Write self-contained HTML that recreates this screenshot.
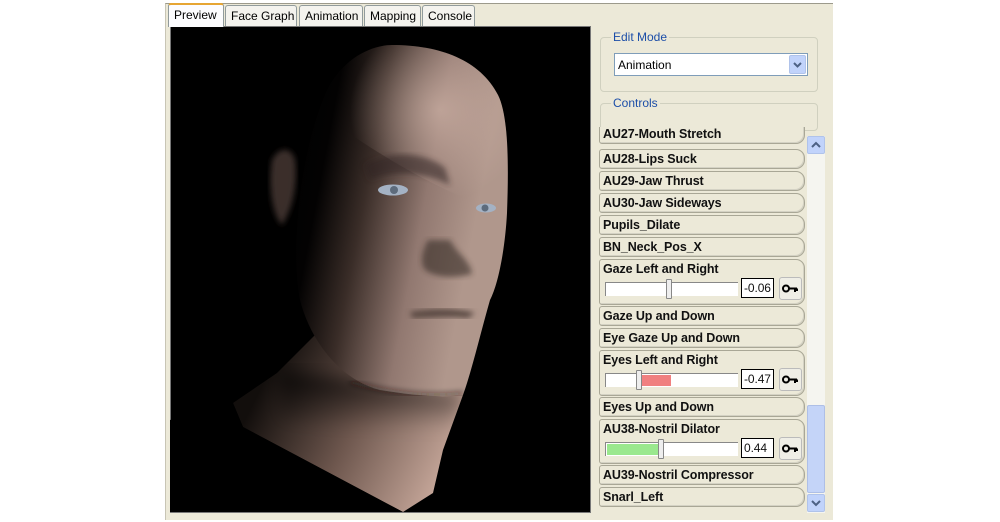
<!DOCTYPE html>
<html><head><style>
*{margin:0;padding:0;box-sizing:border-box}
body{width:1000px;height:522px;background:#fff;position:relative;overflow:hidden;font-family:Tahoma,"DejaVu Sans","Liberation Sans",sans-serif}
.win{position:absolute;left:165px;top:3px;width:668px;height:517px;background:#ece9d8;border-top:1px solid #9c9a8c;border-left:1px solid #c8c5b5}
.tab{position:absolute;top:5px;height:21px;font:12px "Liberation Sans",sans-serif;color:#000;border:1px solid #919b9c;border-bottom:none;background:#f4f3ee;padding:3px 0 0 5px;border-radius:3px 3px 0 0}
.tab.sel{top:3px;height:24px;background:#fcfcfe;border-top:2px solid #e6a533;z-index:2}
.vp{position:absolute;left:170px;top:26px;width:421px;height:487px;background:#000;border:1px solid #777}
.grp{position:absolute;border:1px solid #d0d0bf;border-radius:4px}
.glab{position:absolute;font:12px "Liberation Sans",sans-serif;color:#1c4ea8;background:#ece9d8;padding:0 2px}
.row{position:absolute;left:599px;width:206px;background:#ece9d8;border:1px solid #a9a796;border-radius:3px 9px 9px 3px;box-shadow:inset -1px -1px 0 #d4d2c4;font:bold 12.5px "Liberation Sans",sans-serif;color:#111;padding:2px 0 0 3px;height:20px;letter-spacing:-0.1px}
.track{position:absolute;left:5px;top:22px;width:133px;height:14px;background:#fff;border-top:1px solid #888;border-left:1px solid #888}
.thumb{position:absolute;top:19px;width:6px;height:20px;background:#eee;border:1px solid #888;border-radius:1px}
.val{position:absolute;left:141px;top:18px;width:33px;height:20px;background:#fff;border:1px solid #000;font:12px "Liberation Sans",sans-serif;padding:2px 0 0 2px;font-weight:normal}
.key{position:absolute;left:179px;top:17px;width:23px;height:23px;border:1px solid #bbb;border-radius:3px;background:#efeee6}
.sb{position:absolute;left:807px;width:18px;height:18px;background:#c1d3fb;border:1px solid #b0c3ea;border-radius:2px}
</style></head><body>
<div class="win"></div>
<div class="tab sel" style="left:168px;width:56px">Preview</div>
<div class="tab" style="left:225px;width:72px">Face Graph</div>
<div class="tab" style="left:299px;width:64px">Animation</div>
<div class="tab" style="left:364px;width:57px">Mapping</div>
<div class="tab" style="left:422px;width:53px">Console</div>
<div class="vp">
<svg width="421" height="487" viewBox="170 26 421 487" style="position:absolute;left:-1px;top:-1px">
<defs>
<linearGradient id="sk" gradientUnits="userSpaceOnUse" x1="300" y1="0" x2="510" y2="40">
<stop offset="0" stop-color="#000"/><stop offset="0.25" stop-color="#030202"/><stop offset="0.47" stop-color="#3a2d28"/><stop offset="0.75" stop-color="#917870"/><stop offset="1" stop-color="#b0978c"/></linearGradient>
<radialGradient id="hl" gradientUnits="userSpaceOnUse" cx="440" cy="110" r="90"><stop offset="0" stop-color="#cdb1a5" stop-opacity="0.75"/><stop offset="1" stop-color="#cdb1a5" stop-opacity="0"/></radialGradient>
<linearGradient id="nk" gradientUnits="userSpaceOnUse" x1="260" y1="390" x2="440" y2="480"><stop offset="0" stop-color="#120e0c"/><stop offset="0.5" stop-color="#6e574e"/><stop offset="1" stop-color="#c4a598"/></linearGradient>
<linearGradient id="ns" gradientUnits="userSpaceOnUse" x1="0" y1="380" x2="0" y2="430"><stop offset="0" stop-color="#000" stop-opacity="0.6"/><stop offset="1" stop-color="#000" stop-opacity="0"/></linearGradient>
<filter id="bl"><feGaussianBlur stdDeviation="3"/></filter>
<filter id="bl2"><feGaussianBlur stdDeviation="8"/></filter>
</defs>
<path d="M233 403 L277 373 L330 320 L463 395 L443 450 L433 493 L403 512 L243 427 Z" fill="url(#nk)"/>
<path d="M280 370 L463 395 L450 440 L280 420 Z" fill="url(#ns)" filter="url(#bl2)"/>
<path d="M233 403 L243 427 L403 512 L170 512 L170 420 Z" fill="#000"/>
<path d="M327 90 C345 55 375 45 392 45 C440 45 480 60 498 95 C508 115 509 160 507 213 C505 250 498 285 490 300 C480 335 472 370 463 395 C440 398 410 395 380 390 C340 380 310 340 300 300 C290 250 300 150 327 90 Z" fill="url(#sk)"/>
<path d="M327 90 C345 55 375 45 392 45 C440 45 480 60 498 95 C508 115 509 160 507 213 C460 200 400 170 330 120 Z" fill="url(#hl)"/>
<path d="M272 160 C280 145 292 148 295 160 C298 185 292 210 282 225 C272 215 268 185 272 160 Z" fill="#3a2e2a" filter="url(#bl)"/>
<path d="M365 165 C390 150 425 152 445 168 L450 185 C425 172 395 170 370 180 Z" fill="#2e2420" opacity="0.55" filter="url(#bl)"/>
<ellipse cx="393" cy="190" rx="15" ry="5.5" fill="#a4b2c4"/>
<circle cx="394" cy="190" r="4" fill="#5d6b7c"/>
<ellipse cx="486" cy="208" rx="10" ry="4.5" fill="#a4b2c4"/>
<circle cx="485" cy="208" r="3.5" fill="#5d6b7c"/>
<path d="M428 240 C420 255 420 268 428 272 C440 278 455 278 472 274 C470 260 458 255 450 240 Z" fill="#2a201c" opacity="0.55" filter="url(#bl)"/>
<path d="M410 312 C430 308 460 308 475 313 L468 318 C450 316 430 318 412 318 Z" fill="#5a4842" filter="url(#bl)"/>
<path d="M350 382 C400 396 440 396 463 393" stroke="#1e1614" stroke-width="2" fill="none" filter="url(#bl)"/>
</svg>
</div>
<div class="grp" style="left:600px;top:37px;width:218px;height:55px"></div>
<div class="glab" style="left:611px;top:30px">Edit Mode</div>
<div style="position:absolute;left:614px;top:53px;width:194px;height:23px;background:#fff;border:1px solid #7f9db9;font:12px 'Liberation Sans',sans-serif;padding:4px 0 0 3px">Animation</div>
<div style="position:absolute;left:789px;top:55px;width:17px;height:19px;background:#c1d3fb;border:1px solid #b0c3ea;border-radius:2px"><svg width="15" height="17"><path d="M4 7 L7.5 10.5 L11 7" stroke="#4d6185" stroke-width="2" fill="none"/></svg></div>
<div class="grp" style="left:600px;top:103px;width:218px;height:28px"></div>
<div class="glab" style="left:611px;top:96px">Controls</div>
<div style="position:absolute;left:596px;top:127px;width:231px;height:387px;overflow:hidden">
<div class="row" style="left:3px;top:-8px;height:25px;padding-top:7px">AU27-Mouth Stretch</div>
</div>
<div class="row" style="top:149px">AU28-Lips Suck</div>
<div class="row" style="top:171px">AU29-Jaw Thrust</div>
<div class="row" style="top:193px">AU30-Jaw Sideways</div>
<div class="row" style="top:215px">Pupils_Dilate</div>
<div class="row" style="top:237px">BN_Neck_Pos_X</div>
<div class="row" style="top:259px;height:46px">Gaze Left and Right
<div class="track"></div><div class="thumb" style="left:66px"></div><div class="val">-0.06</div><div class="key"><svg width="21" height="21"><circle cx="6" cy="10.5" r="3" stroke="#000" stroke-width="2" fill="none"/><path d="M9 10.5 H17 M15 10.5 V14 M17 10.5 V13" stroke="#000" stroke-width="2"/></svg></div></div>
<div class="row" style="top:306px">Gaze Up and Down</div>
<div class="row" style="top:328px">Eye Gaze Up and Down</div>
<div class="row" style="top:350px;height:46px">Eyes Left and Right
<div class="track"><div style="position:absolute;left:36px;top:1px;width:29px;height:11px;background:#f08080"></div></div><div class="thumb" style="left:36px"></div><div class="val">-0.47</div><div class="key"><svg width="21" height="21"><circle cx="6" cy="10.5" r="3" stroke="#000" stroke-width="2" fill="none"/><path d="M9 10.5 H17 M15 10.5 V14 M17 10.5 V13" stroke="#000" stroke-width="2"/></svg></div></div>
<div class="row" style="top:397px">Eyes Up and Down</div>
<div class="row" style="top:419px;height:45px">AU38-Nostril Dilator
<div class="track"><div style="position:absolute;left:1px;top:1px;width:55px;height:11px;background:#9ae88e"></div></div><div class="thumb" style="left:58px"></div><div class="val">0.44</div><div class="key"><svg width="21" height="21"><circle cx="6" cy="10.5" r="3" stroke="#000" stroke-width="2" fill="none"/><path d="M9 10.5 H17 M15 10.5 V14 M17 10.5 V13" stroke="#000" stroke-width="2"/></svg></div></div>
<div class="row" style="top:465px">AU39-Nostril Compressor</div>
<div class="row" style="top:487px">Snarl_Left</div>
<div style="position:absolute;left:807px;top:136px;width:18px;height:377px;background:#f5f5f0"></div>
<div class="sb" style="top:136px"><svg width="16" height="16"><path d="M4 10 L8 6 L12 10" stroke="#4d6185" stroke-width="2" fill="none"/></svg></div>
<div style="position:absolute;left:807px;top:405px;width:18px;height:88px;background:#c4d4f8;border:1px solid #aebfe6;border-radius:2px"></div>
<div class="sb" style="top:494px"><svg width="16" height="16"><path d="M4 6 L8 10 L12 6" stroke="#4d6185" stroke-width="2" fill="none"/></svg></div>
</body></html>
